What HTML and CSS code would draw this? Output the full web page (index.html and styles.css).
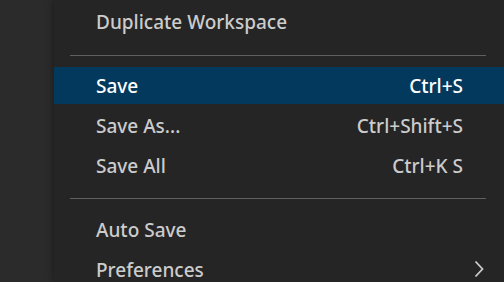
FILE: index.html
```html
<!DOCTYPE html>
<html>

<head>
	<title>File Menu</title>
	<meta charset=utf-8>
	<meta name=viewport content="width=device-width, initial-scale=1">
	<link rel="stylesheet" href="styles.css">
</head>

<body>
	<div id="side"></div>
	<div id="menu">
		<div class="row">
			<div class="item"><span class="label">Duplicate Workspace</span></div>
		</div>
		<div class="sep first"></div>
		<div class="row">
			<div class="item active"><span class="label">Save</span><span class="key">Ctrl+S</span></div>
		</div>
		<div class="row">
			<div class="item"><span class="label">Save As...</span><span class="key">Ctrl+Shift+S</span></div>
		</div>
		<div class="row">
			<div class="item"><span class="label">Save All</span><span class="key">Ctrl+K S</span></div>
		</div>
		<div class="sep"></div>
		<div class="row">
			<div class="item"><span class="label">Auto Save</span></div>
		</div>
		<div class="row">
			<div class="item"><span class="label">Preferences</span>
				<svg class="more" width="12" height="18" viewBox="0 0 12 18">
					<path d="M2.5 1.5 L9.5 9 L2.5 16.5" fill="none" stroke="#cccccc" stroke-width="1.8" />
				</svg>
			</div>
		</div>
	</div>
</body>

</html>
```

FILE: styles.css
```css
body {
	margin: 0;
	height: 282px;
	overflow: hidden;
	background: #2b2b2b;
	font-family: "Noto Sans", "Open Sans", sans-serif;
	font-size: 19px;
	font-weight: 500;
	color: #cccccc;
	display: flex;
}

#side {
	width: 54px;
	flex: none;
}

#menu {
	flex: 1;
	background: #252526;
	box-shadow: 0 0 8px rgba(0, 0, 0, 0.45);
	padding-top: 2px;
}

.row {
	height: 40px;
	padding-top: 1px;
	box-sizing: border-box;
}

.item {
	height: 37px;
	display: flex;
	align-items: center;
	padding: 0 41px 0 42px;
	position: relative;
}

.item.active {
	background: #04395e;
	color: #ffffff;
}

.label {
	flex: 1;
}

.key {
	text-align: right;
}

.more {
	position: absolute;
	right: 19px;
	top: 9px;
}

.sep {
	height: 24px;
	box-sizing: border-box;
	padding-top: 12px;
	margin: 0 18px 0 16px;
}

.sep::after {
	content: "";
	display: block;
	height: 1px;
	background: #606060;
}

.sep.first {
	padding-top: 13px;
}
```
